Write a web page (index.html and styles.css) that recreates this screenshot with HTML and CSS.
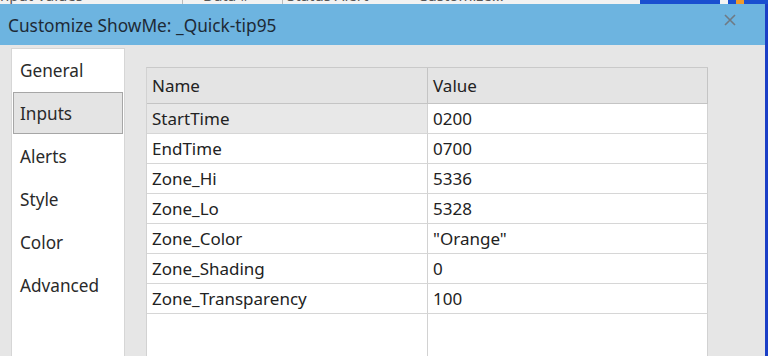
FILE: index.html
```html
<!DOCTYPE html>
<html lang="en">
<head>
    <meta charset="UTF-8">
    <title>Customize ShowMe</title>
    <link rel="stylesheet" href="styles.css">
</head>
<body>
    <div class="backdrop">
        <span class="bg-label">nput Values</span>
        <span class="bg-label bg-data">Data #</span>
        <span class="bg-label bg-status">Status Alert</span>
        <span class="bg-label bg-custom">Customize...</span>
        <div class="bg-blue">
            <span class="bg-chip white"></span>
            <span class="bg-chip orange"></span>
        </div>
    </div>
    <div class="dialog">
        <div class="titlebar">
            <span class="title">Customize ShowMe: _Quick-tip95</span>
            <svg class="close" width="12" height="12" viewBox="0 0 12 12">
                <path d="M1 1 L11 11 M11 1 L1 11" stroke="#6f7a84" stroke-width="1.6" fill="none"/>
            </svg>
        </div>
        <div class="content">
            <div class="tabs">
                <div class="tab">General</div>
                <div class="tab selected">Inputs</div>
                <div class="tab">Alerts</div>
                <div class="tab">Style</div>
                <div class="tab">Color</div>
                <div class="tab">Advanced</div>
            </div>
            <div class="grid">
                <div class="row head">
                    <div class="cell">Name</div>
                    <div class="cell">Value</div>
                </div>
                <div class="row current">
                    <div class="cell">StartTime</div>
                    <div class="cell">0200</div>
                </div>
                <div class="row">
                    <div class="cell">EndTime</div>
                    <div class="cell">0700</div>
                </div>
                <div class="row">
                    <div class="cell">Zone_Hi</div>
                    <div class="cell">5336</div>
                </div>
                <div class="row">
                    <div class="cell">Zone_Lo</div>
                    <div class="cell">5328</div>
                </div>
                <div class="row">
                    <div class="cell">Zone_Color</div>
                    <div class="cell">"Orange"</div>
                </div>
                <div class="row">
                    <div class="cell">Zone_Shading</div>
                    <div class="cell">0</div>
                </div>
                <div class="row">
                    <div class="cell">Zone_Transparency</div>
                    <div class="cell">100</div>
                </div>
                <div class="row filler">
                    <div class="cell"></div>
                    <div class="cell"></div>
                </div>
            </div>
        </div>
    </div>
</body>
</html>
```

FILE: styles.css
```css
html, body {
    margin: 0;
    width: 768px;
    height: 356px;
    overflow: hidden;
}
body {
    font-family: 'Noto Sans', 'Open Sans', sans-serif;
    color: #222;
    background: #1b3fc6;
    display: flex;
    flex-direction: column;
}
.backdrop {
    height: 4px;
    flex: none;
    display: flex;
    background: #f2f2f2;
    position: relative;
    overflow: hidden;
    font-size: 15px;
}
.bg-label {
    position: absolute;
    top: -14px;
    left: 0;
    color: #555;
    line-height: 18px;
}
.bg-data { left: 182px; border-left: 1px solid #bbb; padding-left: 20px; }
.bg-status { left: 282px; border-left: 1px solid #bbb; padding-left: 4px; }
.bg-custom { left: 418px; }
.bg-blue {
    margin-left: auto;
    width: 128px;
    background: #1a4fd0;
    display: flex;
    gap: 8px;
    padding-left: 80px;
    box-sizing: border-box;
}
.bg-chip {
    width: 8px;
    height: 4px;
}
.bg-chip.white { background: #f4f4f4; }
.bg-chip.orange { background: #f09a2a; }
.dialog {
    flex: 1;
    width: 765px;
    display: flex;
    flex-direction: column;
    background: #e6e6e6;
}
.titlebar {
    height: 41px;
    flex: none;
    background: #6db4e0;
    display: flex;
    align-items: center;
    justify-content: space-between;
    padding: 0 29px 0 8px;
}
.title {
    font-size: 17.3px;
    color: #1d2a36;
    margin-top: 2px;
}
.close {
    margin-top: -10px;
}
.content {
    flex: 1;
    display: flex;
    padding: 3px 0 0 11px;
    min-height: 0;
}
.tabs {
    width: 114px;
    background: #fff;
    border: 1px solid #d6d6d6;
    border-bottom: none;
    padding: 0 1px;
    box-sizing: border-box;
    display: flex;
    flex-direction: column;
    gap: 1px;
}
.tab {
    height: 42px;
    box-sizing: border-box;
    padding-left: 6px;
    display: flex;
    align-items: center;
    font-size: 17.2px;
    color: #2a2a2a;
    border: 1px solid transparent;
}
.tab.selected {
    background: #e4e4e4;
    border-color: #a6a6a6;
}
.grid {
    width: 561px;
    margin: 19px 0 0 21px;
    display: flex;
    flex-direction: column;
    border-top: 1px solid #c9c9c9;
    border-left: 1px solid #d2d2d2;
}
.row {
    display: grid;
    grid-template-columns: 281px 280px;
    height: 30px;
    flex: none;
    background: #fff;
    font-size: 17px;
}
.cell {
    display: flex;
    align-items: center;
    padding-left: 5px;
    border-right: 1px solid #d2d2d2;
    border-bottom: 1px solid #d6d6d6;
}
.row.head {
    height: 36px;
    background: #e4e4e4;
}
.row.head .cell {
    border-right-color: #c4c4c4;
    border-bottom-color: #c4c4c4;
}
.row.current .cell:first-child {
    background: #e8e8e8;
}
.row.filler {
    flex: 1;
}
.row.filler .cell {
    border-bottom: none;
}
```
